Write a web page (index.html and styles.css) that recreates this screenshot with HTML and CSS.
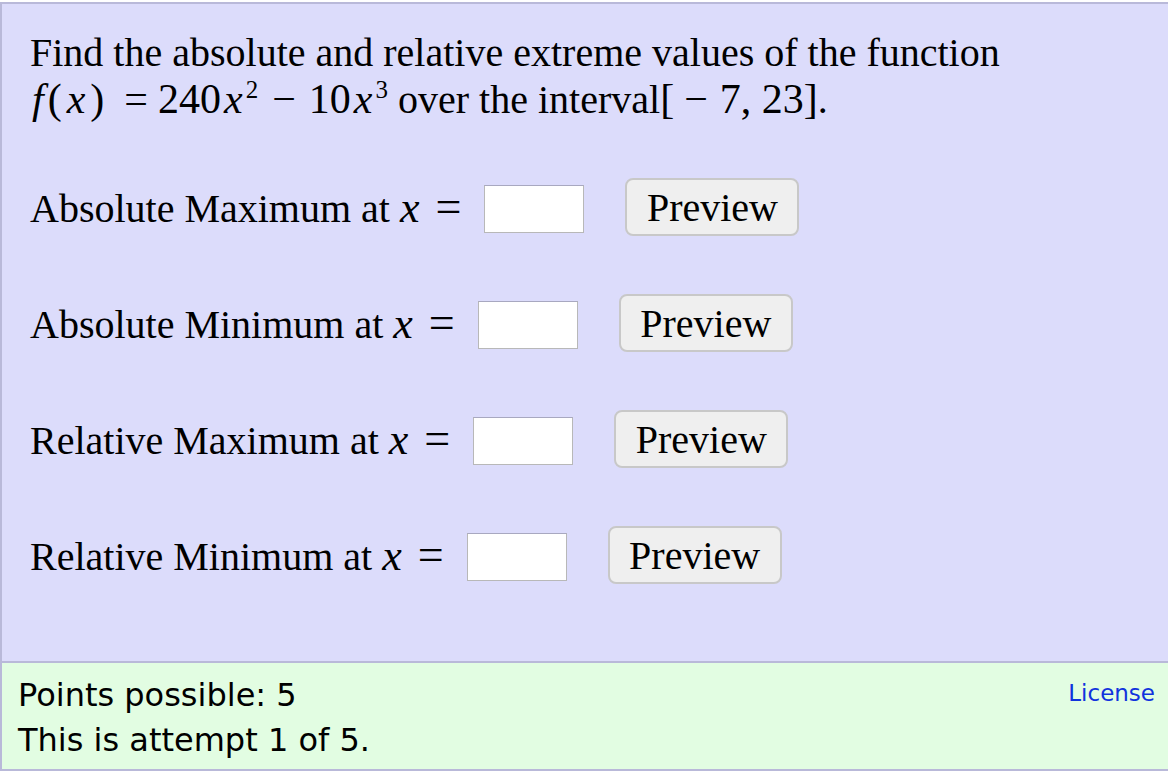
FILE: index.html
```html
<!DOCTYPE html>
<html>
<head>
<meta charset="utf-8">
<link rel="stylesheet" href="styles.css">
</head>
<body>
<div class="wrap">
  <div class="question">
    <p class="prompt">Find the absolute and relative extreme values of the function<br>
    <span class="m"><i class="f">f</i>(<i class="x1">x</i>)<span class="op eq">=</span>240<i class="x2">x</i><sup>2</sup><span class="op mn">−</span>10<i class="x2">x</i><sup>3</sup></span> over the interval<span class="m">[<span class="op mn2">−</span>7, 23]</span>.</p>
    <div class="rows">
      <div class="row"><span class="label">Absolute Maximum at <i class="mx">x</i><span class="op eqr">=</span></span><input class="ans" type="text"><button class="pv">Preview</button></div>
      <div class="row"><span class="label">Absolute Minimum at <i class="mx">x</i><span class="op eqr">=</span></span><input class="ans" type="text"><button class="pv">Preview</button></div>
      <div class="row"><span class="label">Relative Maximum at <i class="mx">x</i><span class="op eqr">=</span></span><input class="ans" type="text"><button class="pv">Preview</button></div>
      <div class="row"><span class="label">Relative Minimum at <i class="mx">x</i><span class="op eqr">=</span></span><input class="ans" type="text"><button class="pv">Preview</button></div>
    </div>
  </div>
  <div class="footer">
    <a class="license" href="#">License</a>
    <div>Points possible: 5</div>
    <div>This is attempt 1 of 5.</div>
  </div>
</div>
</body>
</html>
```
FILE: styles.css
```css
html, body {
  margin: 0;
  padding: 0;
  background: #ffffff;
}
body {
  width: 1168px;
  height: 774px;
  overflow: hidden;
}
.wrap {
  margin-top: 2px;
  border-left: 2px solid #b9b9d9;
  border-top: 2px solid #b9b9d9;
  border-bottom: 2px solid #b9b9d9;
}
.question {
  background: #dcdcfb;
  height: 657px;
  padding-left: 28px;
  font-family: "Liberation Serif", "Times New Roman", serif;
  font-size: 40px;
  color: #000;
  box-sizing: border-box;
  padding-top: 25px;
}
.prompt {
  margin: 0;
  line-height: 47px;
}
.m {
  font-size: 42px;
  line-height: 0;
}
.m i {
  font-style: italic;
}
.f {
  margin: 0 4px 0 2px;
}
.x1 {
  margin: 0 5px;
}
.x2 {
  margin: 0 0 0 3px;
}
.mx {
  font-style: italic;
  font-size: 44px;
}
.op {
  display: inline-block;
  line-height: 0;
}
.eq {
  margin: 0 10px 0 20px;
}
.mn {
  margin: 0 13px 0 14px;
}
.mn2 {
  margin: 0 12px 0 10px;
}
.eqr {
  font-size: 46px;
  margin: 0 23px 0 16px;
}
sup {
  font-size: 25px;
  line-height: 0;
  vertical-align: 15px;
  margin-left: 3px;
}
.rows {
  display: flex;
  flex-direction: column;
  gap: 58px;
  margin-top: 55px;
}
.row {
  display: flex;
  align-items: center;
  height: 58px;
}
.label {
  white-space: nowrap;
}
.ans {
  width: 100px;
  height: 48px;
  box-sizing: border-box;
  margin: 4px 0 0 0;
  border: 1px solid #b8b8b8;
  border-top-color: #a8a8c0;
  background: #fff;
  padding: 0;
}
.pv {
  margin-left: 41px;
  width: 174px;
  height: 58px;
  box-sizing: border-box;
  background: #efefef;
  border: 2px solid #c8c8c8;
  border-radius: 8px;
  font-family: "Liberation Serif", "Times New Roman", serif;
  font-size: 40px;
  color: #000;
  padding: 0;
}
.footer {
  background: #e2fde2;
  border-top: 2px solid #b9b9d9;
  height: 108px;
  box-sizing: border-box;
  padding: 10px 13px 0 16px;
  font-family: "DejaVu Sans", Verdana, sans-serif;
  font-size: 32px;
  line-height: 45px;
  color: #000;
}
.license {
  float: right;
  font-size: 23px;
  line-height: 32px;
  color: #1133dd;
  text-decoration: none;
  margin-top: 4px;
}
```
